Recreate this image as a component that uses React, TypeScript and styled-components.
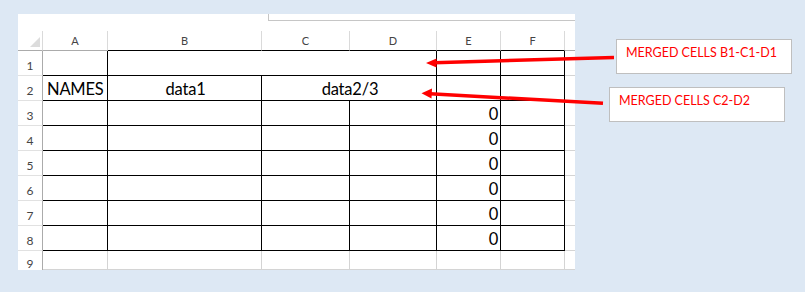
import styled, { createGlobalStyle } from "styled-components";

const GlobalStyle = createGlobalStyle`
  html, body {
    margin: 0;
    padding: 0;
    background: #dde8f4;
  }
  body {
    font-family: Lato, "Liberation Sans", sans-serif;
  }
`;

const COLS = ["A", "B", "C", "D", "E", "F"];

type Ref = { text?: string; span?: number; align?: "left" | "center" | "right" };

// one entry per visible cell, merged cells carry a span
const ROWS: Ref[][] = [
  [{}, { span: 3 }, {}, {}],
  [{ text: "NAMES" }, { text: "data1", align: "center" }, { text: "data2/3", span: 2, align: "center" }, {}, {}],
  ...Array.from({ length: 6 }, () => [{}, {}, {}, {}, { text: "0", align: "right" as const }, {}]),
];

const App = () => {
  return (
    <>
      <GlobalStyle />
      <Page>
        <Sheet>
          <TopStrip>
            <FormulaEdge />
          </TopStrip>
          <Grid>
            <Corner>
              <Triangle />
            </Corner>
            {COLS.map((c, i) => (
              <ColHead key={c} $ink={i > 0}>
                {c}
              </ColHead>
            ))}
            <ColHead $last />

            {ROWS.map((row, r) => (
              <Row key={r} index={r + 1} cells={row} />
            ))}

            <RowHead $last>9</RowHead>
            {COLS.map((c) => (
              <Cell key={c} />
            ))}
            <Cell $last />
          </Grid>
        </Sheet>

        <Notes>
          <Callout $indent={41}>MERGED CELLS B1-C1-D1</Callout>
          <Callout $indent={34}>MERGED CELLS C2-D2</Callout>
        </Notes>

        <Arrows viewBox="0 0 805 292" width="805" height="292">
          <line x1="614" y1="57.5" x2="434" y2="62.7" stroke="#ff0000" strokeWidth="3.5" />
          <polygon points="426,63 436.5,58.6 436.5,67.4" fill="#ff0000" />
          <line x1="603" y1="103.2" x2="430" y2="93.8" stroke="#ff0000" strokeWidth="3.5" />
          <polygon points="421.5,93.3 432,88.6 431.5,98.6" fill="#ff0000" />
        </Arrows>
      </Page>
    </>
  );
};

const Row = ({ index, cells }: { index: number; cells: Ref[] }) => (
  <>
    <RowHead>{index}</RowHead>
    {cells.map((c, i) => (
      <Cell key={i} $ink $span={c.span} $align={c.align}>
        {c.text}
      </Cell>
    ))}
    <Cell $last />
  </>
);

export default App;

const Page = styled.div`
  position: relative;
  width: 805px;
  height: 292px;
  display: flex;
  align-items: flex-start;
  overflow: hidden;
`;

const Sheet = styled.div`
  margin: 14px 0 0 18px;
  width: 557px;
  height: 256px;
  background: #fff;
  display: flex;
  flex-direction: column;
  overflow: hidden;
`;

const TopStrip = styled.div`
  height: 17px;
  flex: none;
  display: flex;
  padding-left: 250px;
`;

const FormulaEdge = styled.div`
  flex: 1;
  height: 6px;
  border-left: 1px solid #c6c6c6;
  border-bottom: 1px solid #c6c6c6;
`;

const Grid = styled.div`
  display: grid;
  grid-template-columns: 25px 65px 154px 88px 87px 64px 64px 10px;
  grid-template-rows: 20px repeat(8, 25px) 19px;
`;

const Corner = styled.div`
  box-sizing: border-box;
  border-right: 1px solid #dadada;
  border-bottom: 1px solid #ababab;
  display: flex;
  align-items: flex-end;
  justify-content: flex-end;
  padding: 0 2px 3px 0;
`;

const Triangle = styled.div`
  width: 0;
  height: 0;
  border-left: 10px solid transparent;
  border-bottom: 10px solid #dcdcdc;
`;

const ColHead = styled.div<{ $ink?: boolean; $last?: boolean }>`
  box-sizing: border-box;
  border-right: ${(p) => (p.$last ? "none" : "1px solid #dadada")};
  border-bottom: 1px solid ${(p) => (p.$ink ? "#000" : "#ababab")};
  display: flex;
  align-items: center;
  justify-content: center;
  font-size: 11px;
  line-height: 19px;
  color: #444;
`;

const RowHead = styled.div<{ $last?: boolean }>`
  box-sizing: border-box;
  border-right: 1px solid #ababab;
  border-bottom: ${(p) => (p.$last ? "none" : "1px solid #e1e1e1")};
  display: flex;
  align-items: center;
  justify-content: center;
  padding-top: 5px;
  font-size: 12px;
  line-height: 19px;
  color: #444;
`;

const Cell = styled.div<{ $ink?: boolean; $last?: boolean; $span?: number; $align?: "left" | "center" | "right" }>`
  grid-column: span ${(p) => p.$span ?? 1};
  box-sizing: border-box;
  min-width: 0;
  border-right: ${(p) => (p.$last ? "none" : `1px solid ${p.$ink ? "#000" : "#d4d4d4"}`)};
  border-bottom: 1px solid ${(p) => (p.$ink ? "#000" : "#d4d4d4")};
  display: flex;
  align-items: flex-end;
  justify-content: ${(p) =>
    p.$align === "center" ? "center" : p.$align === "right" ? "flex-end" : "flex-start"};
  padding: 0 2px 1px 4px;
  font-size: 16.5px;
  letter-spacing: -0.2px;
  line-height: 20px;
  color: #000;
  white-space: nowrap;
  overflow: hidden;
`;

const Notes = styled.div`
  display: flex;
  flex-direction: column;
  gap: 13px;
  padding-top: 39px;
`;

const Callout = styled.div<{ $indent: number }>`
  margin-left: ${(p) => p.$indent}px;
  width: 176px;
  height: 35px;
  box-sizing: border-box;
  border: 1px solid #bfbfbf;
  background: #fff;
  padding: 5px 0 0 9px;
  font-size: 12.5px;
  line-height: 15px;
  color: #ff0000;
  white-space: nowrap;
`;

const Arrows = styled.svg`
  position: absolute;
  left: 0;
  top: 0;
  pointer-events: none;
`;
